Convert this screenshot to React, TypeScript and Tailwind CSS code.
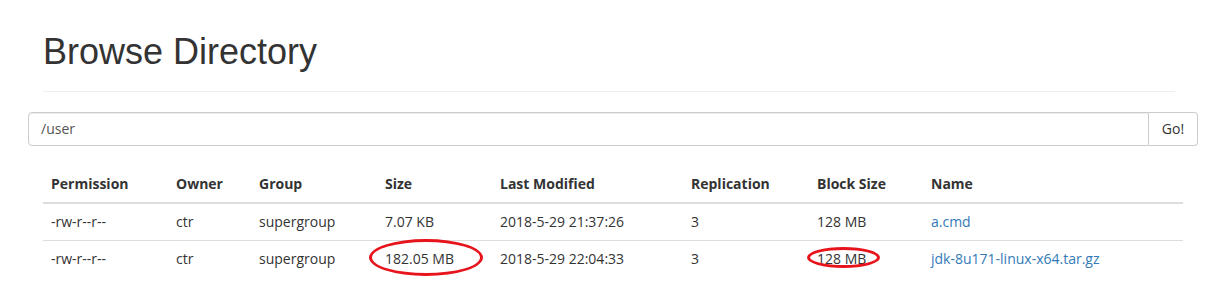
import React from "react";

type Row = {
  perm: string;
  owner: string;
  group: string;
  size: string;
  modified: string;
  repl: string;
  block: string;
  name: string;
  markSize?: boolean;
  markBlock?: boolean;
};

const rows: Row[] = [
  { perm: "-rw-r--r--", owner: "ctr", group: "supergroup", size: "7.07 KB", modified: "2018-5-29 21:37:26", repl: "3", block: "128 MB", name: "a.cmd" },
  { perm: "-rw-r--r--", owner: "ctr", group: "supergroup", size: "182.05 MB", modified: "2018-5-29 22:04:33", repl: "3", block: "128 MB", name: "jdk-8u171-linux-x64.tar.gz", markSize: true, markBlock: true },
];

const cols = [
  { label: "Permission", w: "w-[125px]" },
  { label: "Owner", w: "w-[83px]" },
  { label: "Group", w: "w-[126px]" },
  { label: "Size", w: "w-[115px]" },
  { label: "Last Modified", w: "w-[191px]" },
  { label: "Replication", w: "w-[126px]" },
  { label: "Block Size", w: "w-[114px]" },
  { label: "Name", w: "" },
];

const td = "px-2 py-2 leading-5 border-t border-[#ddd] align-top";

export default function App() {
  return (
    <div className="w-[1218px] h-[292px] bg-white overflow-hidden text-[#333] font-['Open_Sans',sans-serif] text-[14px]">
      {/* header */}
      <div className="mx-[43px] pt-[32px] pb-[19px] border-b border-[#eee]">
        <h1 className="font-['Liberation_Sans',Arial,sans-serif] text-[36px] leading-[39.6px] font-normal text-[#333]">
          Browse Directory
        </h1>
      </div>

      {/* path box */}
      <div className="ml-[28px] mr-[20px] mt-[20px] flex h-[34px]">
        <div className="flex-1 border border-[#ccc] rounded-l-[4px] px-3 flex items-center text-[#555] shadow-[inset_0_1px_1px_rgba(0,0,0,0.075)]">
          /user
        </div>
        <div className="w-[49px] border border-l-0 border-[#ccc] rounded-r-[4px] flex items-center justify-center text-[#333]">
          Go!
        </div>
      </div>

      {/* listing */}
      <table className="mx-[43px] mt-[20px] w-[1140px] border-collapse">
        <thead>
          <tr>
            {cols.map(c => (
              <th key={c.label} className={`${c.w} px-2 py-2 leading-5 text-left font-bold border-b-2 border-[#ddd]`}>
                {c.label}
              </th>
            ))}
          </tr>
        </thead>
        <tbody>
          {rows.map(r => (
            <tr key={r.name}>
              <td className={td}>{r.perm}</td>
              <td className={td}>{r.owner}</td>
              <td className={td}>{r.group}</td>
              <td className={td}>
                <span className="relative">
                  {r.size}
                  {r.markSize && (
                    <span className="absolute left-[-16px] top-[-10px] w-[114px] h-[37px] rounded-[50%] border-[3px] border-[#e8141c]" />
                  )}
                </span>
              </td>
              <td className={td}>{r.modified}</td>
              <td className={td}>{r.repl}</td>
              <td className={td}>
                <span className="relative">
                  {r.block}
                  {r.markBlock && (
                    <span className="absolute left-[-10px] top-[-2px] w-[73px] h-[21px] rounded-[50%] border-[3px] border-[#e8141c]" />
                  )}
                </span>
              </td>
              <td className={td}>
                <a className="text-[#337ab7]">{r.name}</a>
              </td>
            </tr>
          ))}
        </tbody>
      </table>
    </div>
  );
}
